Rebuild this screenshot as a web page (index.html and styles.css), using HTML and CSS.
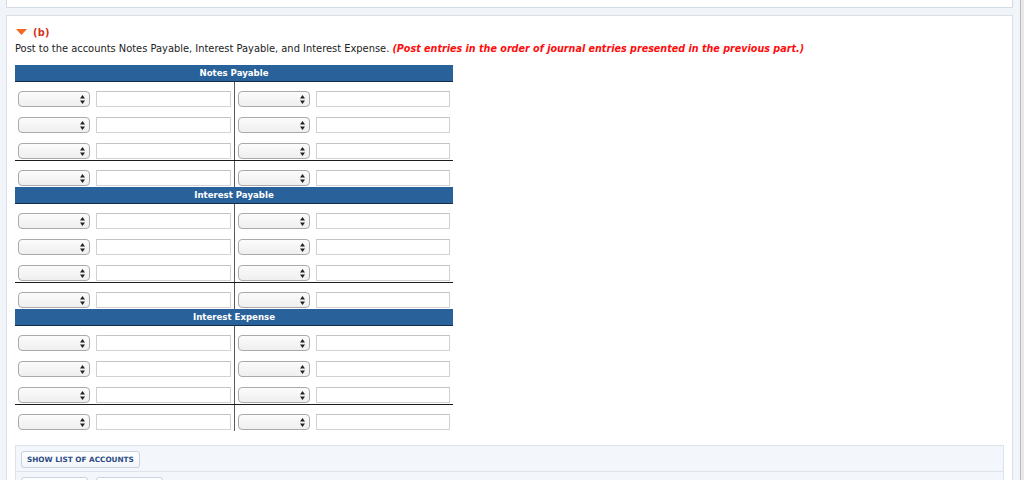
FILE: index.html
```html
<!DOCTYPE html>
<html>
<head>
<meta charset="utf-8">
<link rel="stylesheet" href="styles.css">
</head>
<body>
<div class="page">
  <div class="top-panel"></div>
  <div class="panel">
    <div class="part-head">
      <svg class="caret" width="11" height="6" viewBox="0 0 11 6"><polygon points="0,0 11,0 5.5,6" fill="#f26a22"/></svg>
      <span class="part-label">(b)</span>
    </div>
    <p class="instr">Post to the accounts Notes Payable, Interest Payable, and Interest Expense. <em class="note">(Post entries in the order of journal entries presented in the previous part.)</em></p>

    <div class="taccounts">
      <section class="tacct">
        <div class="tacct-title">Notes Payable</div>
        <div class="tacct-row"><div class="cell dr"><div class="sel"><svg width="5" height="9" viewBox="0 0 5 9"><polygon points="0,3.5 2.5,0 5,3.5" fill="#222"/><polygon points="0,5.5 5,5.5 2.5,9" fill="#222"/></svg></div><div class="inp"></div></div><div class="cell cr"><div class="sel"><svg width="5" height="9" viewBox="0 0 5 9"><polygon points="0,3.5 2.5,0 5,3.5" fill="#222"/><polygon points="0,5.5 5,5.5 2.5,9" fill="#222"/></svg></div><div class="inp"></div></div></div>
        <div class="tacct-row"><div class="cell dr"><div class="sel"><svg width="5" height="9" viewBox="0 0 5 9"><polygon points="0,3.5 2.5,0 5,3.5" fill="#222"/><polygon points="0,5.5 5,5.5 2.5,9" fill="#222"/></svg></div><div class="inp"></div></div><div class="cell cr"><div class="sel"><svg width="5" height="9" viewBox="0 0 5 9"><polygon points="0,3.5 2.5,0 5,3.5" fill="#222"/><polygon points="0,5.5 5,5.5 2.5,9" fill="#222"/></svg></div><div class="inp"></div></div></div>
        <div class="tacct-row ruled"><div class="cell dr"><div class="sel"><svg width="5" height="9" viewBox="0 0 5 9"><polygon points="0,3.5 2.5,0 5,3.5" fill="#222"/><polygon points="0,5.5 5,5.5 2.5,9" fill="#222"/></svg></div><div class="inp"></div></div><div class="cell cr"><div class="sel"><svg width="5" height="9" viewBox="0 0 5 9"><polygon points="0,3.5 2.5,0 5,3.5" fill="#222"/><polygon points="0,5.5 5,5.5 2.5,9" fill="#222"/></svg></div><div class="inp"></div></div></div>
        <div class="tacct-row"><div class="cell dr"><div class="sel"><svg width="5" height="9" viewBox="0 0 5 9"><polygon points="0,3.5 2.5,0 5,3.5" fill="#222"/><polygon points="0,5.5 5,5.5 2.5,9" fill="#222"/></svg></div><div class="inp"></div></div><div class="cell cr"><div class="sel"><svg width="5" height="9" viewBox="0 0 5 9"><polygon points="0,3.5 2.5,0 5,3.5" fill="#222"/><polygon points="0,5.5 5,5.5 2.5,9" fill="#222"/></svg></div><div class="inp"></div></div></div>
      </section>
      <section class="tacct">
        <div class="tacct-title">Interest Payable</div>
        <div class="tacct-row"><div class="cell dr"><div class="sel"><svg width="5" height="9" viewBox="0 0 5 9"><polygon points="0,3.5 2.5,0 5,3.5" fill="#222"/><polygon points="0,5.5 5,5.5 2.5,9" fill="#222"/></svg></div><div class="inp"></div></div><div class="cell cr"><div class="sel"><svg width="5" height="9" viewBox="0 0 5 9"><polygon points="0,3.5 2.5,0 5,3.5" fill="#222"/><polygon points="0,5.5 5,5.5 2.5,9" fill="#222"/></svg></div><div class="inp"></div></div></div>
        <div class="tacct-row"><div class="cell dr"><div class="sel"><svg width="5" height="9" viewBox="0 0 5 9"><polygon points="0,3.5 2.5,0 5,3.5" fill="#222"/><polygon points="0,5.5 5,5.5 2.5,9" fill="#222"/></svg></div><div class="inp"></div></div><div class="cell cr"><div class="sel"><svg width="5" height="9" viewBox="0 0 5 9"><polygon points="0,3.5 2.5,0 5,3.5" fill="#222"/><polygon points="0,5.5 5,5.5 2.5,9" fill="#222"/></svg></div><div class="inp"></div></div></div>
        <div class="tacct-row ruled"><div class="cell dr"><div class="sel"><svg width="5" height="9" viewBox="0 0 5 9"><polygon points="0,3.5 2.5,0 5,3.5" fill="#222"/><polygon points="0,5.5 5,5.5 2.5,9" fill="#222"/></svg></div><div class="inp"></div></div><div class="cell cr"><div class="sel"><svg width="5" height="9" viewBox="0 0 5 9"><polygon points="0,3.5 2.5,0 5,3.5" fill="#222"/><polygon points="0,5.5 5,5.5 2.5,9" fill="#222"/></svg></div><div class="inp"></div></div></div>
        <div class="tacct-row"><div class="cell dr"><div class="sel"><svg width="5" height="9" viewBox="0 0 5 9"><polygon points="0,3.5 2.5,0 5,3.5" fill="#222"/><polygon points="0,5.5 5,5.5 2.5,9" fill="#222"/></svg></div><div class="inp"></div></div><div class="cell cr"><div class="sel"><svg width="5" height="9" viewBox="0 0 5 9"><polygon points="0,3.5 2.5,0 5,3.5" fill="#222"/><polygon points="0,5.5 5,5.5 2.5,9" fill="#222"/></svg></div><div class="inp"></div></div></div>
      </section>
      <section class="tacct">
        <div class="tacct-title">Interest Expense</div>
        <div class="tacct-row"><div class="cell dr"><div class="sel"><svg width="5" height="9" viewBox="0 0 5 9"><polygon points="0,3.5 2.5,0 5,3.5" fill="#222"/><polygon points="0,5.5 5,5.5 2.5,9" fill="#222"/></svg></div><div class="inp"></div></div><div class="cell cr"><div class="sel"><svg width="5" height="9" viewBox="0 0 5 9"><polygon points="0,3.5 2.5,0 5,3.5" fill="#222"/><polygon points="0,5.5 5,5.5 2.5,9" fill="#222"/></svg></div><div class="inp"></div></div></div>
        <div class="tacct-row"><div class="cell dr"><div class="sel"><svg width="5" height="9" viewBox="0 0 5 9"><polygon points="0,3.5 2.5,0 5,3.5" fill="#222"/><polygon points="0,5.5 5,5.5 2.5,9" fill="#222"/></svg></div><div class="inp"></div></div><div class="cell cr"><div class="sel"><svg width="5" height="9" viewBox="0 0 5 9"><polygon points="0,3.5 2.5,0 5,3.5" fill="#222"/><polygon points="0,5.5 5,5.5 2.5,9" fill="#222"/></svg></div><div class="inp"></div></div></div>
        <div class="tacct-row ruled"><div class="cell dr"><div class="sel"><svg width="5" height="9" viewBox="0 0 5 9"><polygon points="0,3.5 2.5,0 5,3.5" fill="#222"/><polygon points="0,5.5 5,5.5 2.5,9" fill="#222"/></svg></div><div class="inp"></div></div><div class="cell cr"><div class="sel"><svg width="5" height="9" viewBox="0 0 5 9"><polygon points="0,3.5 2.5,0 5,3.5" fill="#222"/><polygon points="0,5.5 5,5.5 2.5,9" fill="#222"/></svg></div><div class="inp"></div></div></div>
        <div class="tacct-row"><div class="cell dr"><div class="sel"><svg width="5" height="9" viewBox="0 0 5 9"><polygon points="0,3.5 2.5,0 5,3.5" fill="#222"/><polygon points="0,5.5 5,5.5 2.5,9" fill="#222"/></svg></div><div class="inp"></div></div><div class="cell cr"><div class="sel"><svg width="5" height="9" viewBox="0 0 5 9"><polygon points="0,3.5 2.5,0 5,3.5" fill="#222"/><polygon points="0,5.5 5,5.5 2.5,9" fill="#222"/></svg></div><div class="inp"></div></div></div>
      </section>
    </div>

    <div class="toolbar">
      <button class="btn">SHOW LIST OF ACCOUNTS</button>
    </div>
    <div class="toolbar2">
      <button class="btn2"></button>
      <button class="btn2"></button>
    </div>
  </div>
</div>
</body>
</html>
```
FILE: styles.css
```css
html {
  background: #e9e9e9;
}
body {
  margin: 0;
  font-family: "DejaVu Sans", Verdana, sans-serif;
  color: #222;
  overflow: hidden;
  height: 480px;
}
.page {
  width: 1014px;
  height: 480px;
  padding-left: 6px;
  background: #f1f4f8;
  border-right: 1px solid #b9b9b9;
  overflow: hidden;
}
.top-panel {
  width: 1005px;
  height: 7px;
  background: #fff;
  border: 1px solid #d3dbe6;
  border-top: none;
}
.panel {
  margin-top: 7px;
  width: 997px;
  height: 480px;
  background: #fff;
  border: 1px solid #d9e0ea;
  padding: 10px 0 0 8px;
}
.part-head {
  display: flex;
  align-items: center;
  height: 12px;
  margin-top: 0;
  gap: 6px;
}
.caret {
  margin-left: 1px;
  display: block;
}
.part-label {
  color: #d8321f;
  font-weight: bold;
  font-size: 9.8px;
  letter-spacing: 0.3px;
}
.instr {
  margin: 4px 0 0;
  font-size: 9.9px;
  line-height: 13px;
}
.note {
  color: #ff0d0d;
  font-weight: bold;
  font-size: 9.6px;
}
.taccounts {
  margin-top: 10px;
  width: 438px;
}
.tacct-title {
  height: 16px;
  line-height: 16px;
  background: #29619b;
  border-bottom: 1px solid #132c49;
  color: #fff;
  font-weight: bold;
  font-size: 8.6px;
  text-align: center;
}
.tacct-row {
  display: grid;
  grid-template-columns: 220px 218px;
}
.tacct-row.ruled {
  border-bottom: 1px solid #1c1c1c;
}
.cell {
  display: flex;
  gap: 6px;
  padding: 9px 3px 1px;
}
.cell.dr {
  border-right: 1px solid #5a5a5a;
}
.sel {
  box-sizing: border-box;
  width: 72px;
  height: 16px;
  border: 1px solid #aaa;
  border-radius: 4px;
  background: linear-gradient(#fbfbfb, #efefef);
  display: flex;
  align-items: center;
  justify-content: flex-end;
  padding-right: 4px;
}
.sel svg {
  display: block;
}
.inp {
  box-sizing: border-box;
  width: 135px;
  height: 16px;
  border: 1px solid #d2d2d2;
  border-top-color: #c4c4c4;
  background: #fff;
}
.toolbar {
  margin-top: 14px;
  width: 989px;
  height: 27px;
  box-sizing: border-box;
  background: #f3f6fa;
  border: 1px solid #dce3ec;
  padding: 5px 0 0 5px;
}
.btn {
  display: block;
  height: 17px;
  box-sizing: border-box;
  padding: 0 5px;
  border: 1px solid #c9d2de;
  border-radius: 3px;
  background: linear-gradient(#ffffff, #f2f5f9);
  color: #2b4d84;
  font-family: "DejaVu Sans", Verdana, sans-serif;
  font-weight: bold;
  font-size: 7.3px;
  line-height: 15px;
}
.toolbar2 {
  width: 989px;
  height: 40px;
  box-sizing: border-box;
  background: #f3f6fa;
  border: 1px solid #dce3ec;
  border-top: none;
  padding: 5px 0 0 5px;
  display: flex;
  gap: 8px;
}
.btn2 {
  width: 67px;
  height: 17px;
  border: 1px solid #c9d2de;
  border-radius: 3px;
  background: #fff;
}
```
